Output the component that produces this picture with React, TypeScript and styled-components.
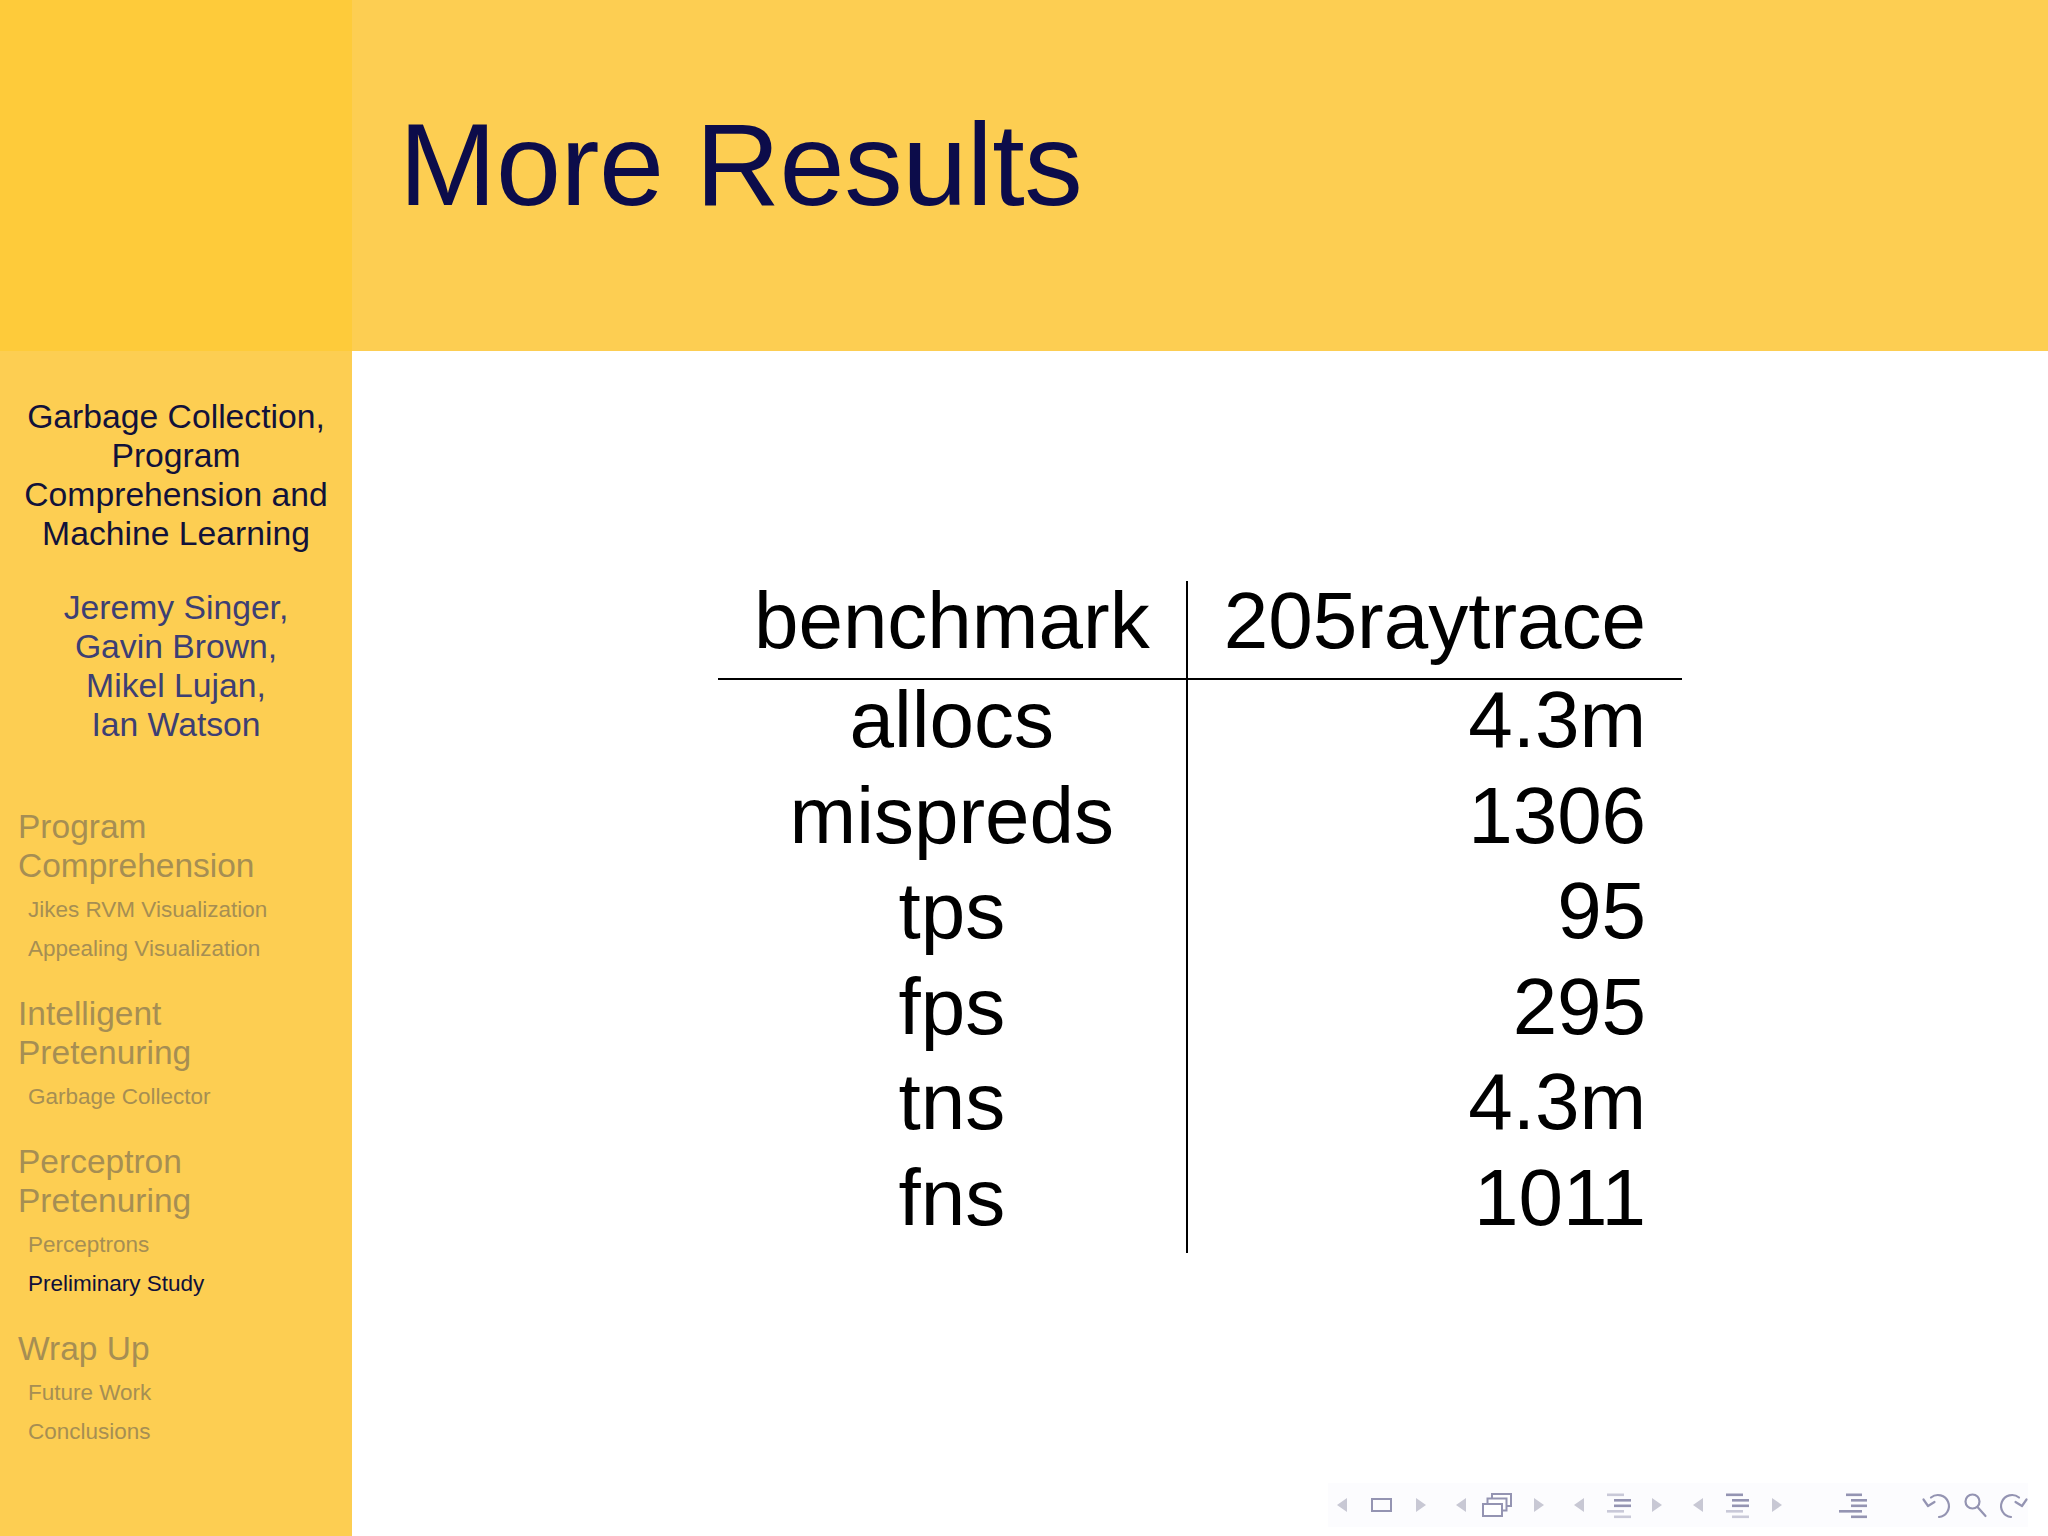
import React from "react";
import styled, { createGlobalStyle } from "styled-components";

const Global = createGlobalStyle`
  html, body { margin: 0; padding: 0; background: #ffffff; }
  #root { width: 2048px; height: 1536px; }
`;

const Page = styled.div`
  width: 2048px;
  height: 1536px;
  display: grid;
  grid-template-columns: 352px 1fr;
  grid-template-rows: 351px 1fr;
  overflow: hidden;
  font-family: "Liberation Sans", Arial, Helvetica, sans-serif;
`;

const Corner = styled.div`
  background: #fecb3a;
`;

const Header = styled.header`
  background: #fdce52;
  padding: 106px 0 0 47px;
`;

const Title = styled.h1`
  margin: 0;
  font-size: 117px;
  line-height: 118px;
  font-weight: 400;
  color: #0c0c4a;
  letter-spacing: -0.5px;
`;

const Sidebar = styled.aside`
  background: #fdce52;
  padding-top: 46px;
  display: flex;
  flex-direction: column;
`;

const DeckTitle = styled.div`
  text-align: center;
  font-size: 33.7px;
  line-height: 39px;
  color: #12123a;
`;

const Authors = styled.div`
  margin-top: 35px;
  text-align: center;
  font-size: 33.7px;
  line-height: 39px;
  color: #3d3f74;
`;

const Toc = styled.nav`
  margin-top: 63px;
  display: flex;
  flex-direction: column;
  gap: 26px;
`;

const Section = styled.div``;

const SectionName = styled.div`
  padding-left: 18px;
  font-size: 33.5px;
  line-height: 39px;
  color: #a68e53;
`;

const SubList = styled.div`
  padding-top: 5px;
  display: flex;
  flex-direction: column;
`;

const SubItem = styled.div<{ $active?: boolean }>`
  padding-left: 28px;
  font-size: 22.5px;
  line-height: 39px;
  color: ${(p) => (p.$active ? "#10103a" : "#a68e53")};
`;

const Main = styled.main`
  background: #ffffff;
  display: flex;
  flex-direction: column;
  align-items: center;
`;

const Table = styled.table`
  margin-top: 230px;
  border-collapse: collapse;
  font-size: 80px;
  color: #000;
  font-weight: 400;
`;

const HeadCell = styled.th<{ $right?: boolean }>`
  font-weight: 400;
  line-height: 80px;
  padding: 0 36px 17px;
  text-align: ${(p) => (p.$right ? "right" : "center")};
  vertical-align: top;
  border-bottom: 2px solid #000;
  border-left: ${(p) => (p.$right ? "2px solid #000" : "none")};
  white-space: nowrap;
`;

const Cell = styled.td<{ $right?: boolean }>`
  line-height: 80px;
  padding: 0 36px 15.5px;
  text-align: ${(p) => (p.$right ? "right" : "center")};
  vertical-align: top;
  border-left: ${(p) => (p.$right ? "2px solid #000" : "none")};
  white-space: nowrap;
`;

const NavBar = styled.div`
  margin-top: auto;
  align-self: stretch;
  height: 44px;
  padding: 0 20px 9px 0;
  display: flex;
  justify-content: flex-end;
  align-items: center;
`;

const NavBox = styled.div`
  display: flex;
  align-items: center;
  background: #fcfcfe;
  height: 44px;
  padding-left: 9px;
`;

const NavIcon = styled.svg<{ $gap: number }>`
  flex: none;
  display: block;
  margin-left: ${(p) => p.$gap}px;
  overflow: visible;
`;

const DARK = "#9494b2";
const FADE = "#c9c9d8";
const ARROW = "#c8c8d4";

const Arrow = ({ dir, gap }: { dir: "l" | "r"; gap: number }) => (
  <NavIcon $gap={gap} width={10} height={14} viewBox="0 0 10 14">
    <polygon points={dir === "l" ? "10,0 0,7 10,14" : "0,0 10,7 0,14"} fill={ARROW} />
  </NavIcon>
);

const FrameIcon = ({ gap }: { gap: number }) => (
  <NavIcon $gap={gap} width={21} height={14} viewBox="0 0 21 14">
    <rect x={1} y={1} width={19} height={12} fill="none" stroke={DARK} strokeWidth={2} />
  </NavIcon>
);

const FramesIcon = ({ gap }: { gap: number }) => (
  <NavIcon $gap={gap} width={30} height={24} viewBox="0 0 30 24">
    <rect x={10} y={1} width={19} height={12} fill="#fff" stroke={DARK} strokeWidth={2} />
    <rect x={5.5} y={5.5} width={19} height={12} fill="#fff" stroke={DARK} strokeWidth={2} />
    <rect x={1} y={11} width={19} height={12} fill="#fff" stroke={DARK} strokeWidth={2} />
  </NavIcon>
);

type Line = { x: number; w: number; dark: boolean };

const LinesIcon = ({ gap, width, lines }: { gap: number; width: number; lines: Line[] }) => (
  <NavIcon $gap={gap} width={width} height={25} viewBox={`0 0 ${width} 25`}>
    {lines.map((l, i) => (
      <rect key={i} x={l.x} y={0.5 + i * 5.5} width={l.w} height={2.6} fill={l.dark ? DARK : FADE} />
    ))}
  </NavIcon>
);

const UndoIcon = ({ gap, mirror }: { gap: number; mirror?: boolean }) => (
  <NavIcon $gap={gap} width={32} height={26} viewBox="0 0 32 26">
    <g
      transform={mirror ? "translate(32 0) scale(-1 1)" : undefined}
      fill="none"
      stroke={DARK}
      strokeWidth={2.2}
      strokeLinecap="round"
      strokeLinejoin="round"
    >
      <path d="M9 5.5 A11 11 0 1 1 17 25" />
      <path d="M1.5 7.5 L6 14 L12.5 10" />
    </g>
  </NavIcon>
);

const SearchIcon = ({ gap }: { gap: number }) => (
  <NavIcon $gap={gap} width={23} height={24} viewBox="0 0 23 24">
    <g fill="none" stroke={DARK} strokeWidth={2.2} strokeLinecap="round">
      <circle cx={8.5} cy={8.5} r={7} />
      <path d="M13.5 14 L21.5 23" />
    </g>
  </NavIcon>
);

const sections = [
  {
    name: ["Program", "Comprehension"],
    subs: ["Jikes RVM Visualization", "Appealing Visualization"],
  },
  { name: ["Intelligent", "Pretenuring"], subs: ["Garbage Collector"] },
  { name: ["Perceptron", "Pretenuring"], subs: ["Perceptrons", "Preliminary Study"] },
  { name: ["Wrap Up"], subs: ["Future Work", "Conclusions"] },
];

const rows: [string, string][] = [
  ["allocs", "4.3m"],
  ["mispreds", "1306"],
  ["tps", "95"],
  ["fps", "295"],
  ["tns", "4.3m"],
  ["fns", "1011"],
];

export default function App() {
  return (
    <>
      <Global />
      <Page>
        <Corner />
        <Header>
          <Title>More Results</Title>
        </Header>
        <Sidebar>
          <DeckTitle>
            Garbage Collection,
            <br />
            Program
            <br />
            Comprehension and
            <br />
            Machine Learning
          </DeckTitle>
          <Authors>
            Jeremy Singer,
            <br />
            Gavin Brown,
            <br />
            Mikel Lujan,
            <br />
            Ian Watson
          </Authors>
          <Toc>
            {sections.map((s, i) => (
              <Section key={i}>
                <SectionName>
                  {s.name.map((n, j) => (
                    <React.Fragment key={j}>
                      {j > 0 && <br />}
                      {n}
                    </React.Fragment>
                  ))}
                </SectionName>
                <SubList>
                  {s.subs.map((sub) => (
                    <SubItem key={sub} $active={sub === "Preliminary Study"}>
                      {sub}
                    </SubItem>
                  ))}
                </SubList>
              </Section>
            ))}
          </Toc>
        </Sidebar>
        <Main>
          <Table>
            <thead>
              <tr>
                <HeadCell>benchmark</HeadCell>
                <HeadCell $right>205raytrace</HeadCell>
              </tr>
            </thead>
            <tbody>
              {rows.map(([k, v]) => (
                <tr key={k}>
                  <Cell>{k}</Cell>
                  <Cell $right>{v}</Cell>
                </tr>
              ))}
            </tbody>
          </Table>
          <NavBar>
            <NavBox>
              <Arrow dir="l" gap={0} />
              <FrameIcon gap={24} />
              <Arrow dir="r" gap={24} />
              <Arrow dir="l" gap={30} />
              <FramesIcon gap={16} />
              <Arrow dir="r" gap={22} />
              <Arrow dir="l" gap={30} />
              <LinesIcon
                gap={23}
                width={24}
                lines={[
                  { x: 0, w: 17, dark: false },
                  { x: 7, w: 17, dark: true },
                  { x: 7, w: 17, dark: true },
                  { x: 0, w: 17, dark: false },
                  { x: 7, w: 17, dark: false },
                ]}
              />
              <Arrow dir="r" gap={21} />
              <Arrow dir="l" gap={31} />
              <LinesIcon
                gap={23}
                width={23}
                lines={[
                  { x: 0, w: 17, dark: true },
                  { x: 6, w: 17, dark: true },
                  { x: 6, w: 17, dark: true },
                  { x: 0, w: 17, dark: false },
                  { x: 6, w: 17, dark: false },
                ]}
              />
              <Arrow dir="r" gap={23} />
              <LinesIcon
                gap={57}
                width={28}
                lines={[
                  { x: 7, w: 16, dark: true },
                  { x: 12, w: 16, dark: true },
                  { x: 12, w: 16, dark: true },
                  { x: 0, w: 23, dark: true },
                  { x: 12, w: 16, dark: true },
                ]}
              />
              <UndoIcon gap={55} />
              <SearchIcon gap={10} />
              <UndoIcon gap={9} mirror />
            </NavBox>
          </NavBar>
        </Main>
      </Page>
    </>
  );
}
